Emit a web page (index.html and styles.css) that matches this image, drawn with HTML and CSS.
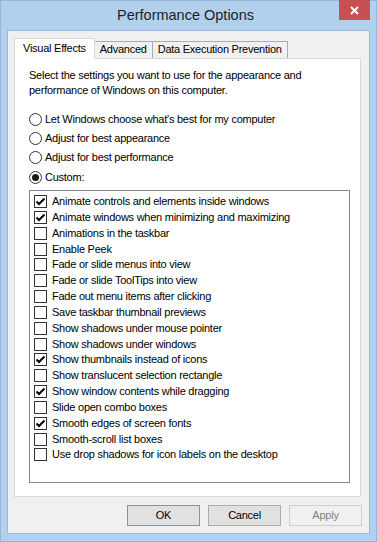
FILE: index.html
```html
<!DOCTYPE html>
<html>
<head>
<meta charset="utf-8">
<link rel="stylesheet" href="styles.css">
</head>
<body>
<div class="window">
  <div class="titlebar">
    <span class="title">Performance Options</span>
    <div class="close"><svg width="9" height="9" viewBox="0 0 9 9"><path d="M1 1 L8 8 M8 1 L1 8" stroke="#fff" stroke-width="2"/></svg></div>
  </div>
  <div class="client">
    <div class="tabs">
      <div class="tab active">Visual Effects</div>
      <div class="tab">Advanced</div>
      <div class="tab">Data Execution Prevention</div>
    </div>
    <div class="panel">
      <p class="intro">Select the settings you want to use for the appearance and performance of Windows on this computer.</p>
      <div class="radios">
        <div class="radio"><span class="circle"></span>Let Windows choose what's best for my computer</div>
        <div class="radio"><span class="circle"></span>Adjust for best appearance</div>
        <div class="radio"><span class="circle"></span>Adjust for best performance</div>
        <div class="radio"><span class="circle on"></span>Custom:</div>
      </div>
      <div class="listbox">
        <div class="item"><span class="box on"></span>Animate controls and elements inside windows</div>
        <div class="item"><span class="box on"></span>Animate windows when minimizing and maximizing</div>
        <div class="item"><span class="box"></span>Animations in the taskbar</div>
        <div class="item"><span class="box"></span>Enable Peek</div>
        <div class="item"><span class="box"></span>Fade or slide menus into view</div>
        <div class="item"><span class="box"></span>Fade or slide ToolTips into view</div>
        <div class="item"><span class="box"></span>Fade out menu items after clicking</div>
        <div class="item"><span class="box"></span>Save taskbar thumbnail previews</div>
        <div class="item"><span class="box"></span>Show shadows under mouse pointer</div>
        <div class="item"><span class="box"></span>Show shadows under windows</div>
        <div class="item"><span class="box on"></span>Show thumbnails instead of icons</div>
        <div class="item"><span class="box"></span>Show translucent selection rectangle</div>
        <div class="item"><span class="box on"></span>Show window contents while dragging</div>
        <div class="item"><span class="box"></span>Slide open combo boxes</div>
        <div class="item"><span class="box on"></span>Smooth edges of screen fonts</div>
        <div class="item"><span class="box"></span>Smooth-scroll list boxes</div>
        <div class="item"><span class="box"></span>Use drop shadows for icon labels on the desktop</div>
      </div>
    </div>
    <div class="buttons">
      <div class="btn default">OK</div>
      <div class="btn">Cancel</div>
      <div class="btn disabled">Apply</div>
    </div>
  </div>
</div>
</body>
</html>
```
FILE: styles.css
```css
* { box-sizing: border-box; }
html, body { margin: 0; padding: 0; }
body {
  width: 377px;
  height: 542px;
  background: #b0d0ee;
  font-family: "Liberation Sans", Arial, sans-serif;
  font-size: 11px;
  letter-spacing: -0.25px;
  color: #000;
  overflow: hidden;
}
.window {
  width: 377px;
  height: 542px;
  border: 1px solid #93b6da;
  display: flex;
  flex-direction: column;
}
.titlebar {
  height: 29px;
  display: grid;
  grid-template-columns: 1fr auto 1fr;
  padding-right: 6px;
}
.title {
  grid-column: 2;
  font-size: 14.5px;
  letter-spacing: 0;
  line-height: 29px;
  color: #1e1e1e;
}
.close {
  grid-column: 3;
  justify-self: end;
  align-self: start;
  width: 31px;
  height: 20px;
  margin-top: -1px;
  background: #c75050;
  display: flex;
  align-items: center;
  justify-content: center;
}
.client {
  margin: 0 6px 0 6px;
  height: 504px;
  border: 1px solid #9ab8d8;
  background: #f0f0f0;
  padding: 7px 8px 7px 6px;
  display: flex;
  flex-direction: column;
}
.tabs {
  height: 20px;
  display: flex;
  align-items: flex-end;
}
.tab {
  height: 17px;
  line-height: 15px;
  padding: 0 5px;
  border: 1px solid #acacac;
  border-bottom: none;
  background: #f0f0f0;
  margin-left: -1px;
  white-space: nowrap;
}
.tab.active {
  height: 21px;
  margin-left: 0;
  margin-bottom: -1px;
  padding: 0 8px;
  line-height: 18px;
  background: #fff;
  border-color: #d9d9d9;
  z-index: 2;
}
.tab.active + .tab { margin-left: 0; border-left: none; }
.panel {
  flex: 1;
  background: #fff;
  border: 1px solid #d9d9d9;
  padding: 9px 10px 13px 14px;
  display: flex;
  flex-direction: column;
}
.intro {
  margin: 0 0 11px 0;
  line-height: 15px;
}
.radios {
  display: flex;
  flex-direction: column;
  margin-bottom: 3px;
}
.radio {
  height: 19.4px;
  display: flex;
  align-items: center;
  white-space: nowrap;
}
.circle {
  width: 13px;
  height: 13px;
  border: 1px solid #333;
  border-radius: 50%;
  background: #fff;
  margin: 1px 3px 0 0;
  flex: none;
  display: flex;
  align-items: center;
  justify-content: center;
}
.circle.on::after {
  content: "";
  width: 7px;
  height: 7px;
  border-radius: 50%;
  background: #1a1a1a;
}
.listbox {
  flex: 1;
  border: 1px solid #828790;
  padding: 3px 4px;
  display: flex;
  flex-direction: column;
}
.item {
  height: 15.85px;
  display: flex;
  align-items: center;
  white-space: nowrap;
  padding-bottom: 1px;
}
.box {
  width: 13px;
  height: 13px;
  border: 1px solid #333;
  background: #fff;
  margin: 1px 5px 0 0;
  flex: none;
}
.box.on {
  background: #fff url("data:image/svg+xml;utf8,<svg xmlns='http://www.w3.org/2000/svg' width='11' height='11' viewBox='0 0 11 11'><path d='M1.5 5.5 L4 8 L9.5 2.5' fill='none' stroke='%23000' stroke-width='2'/></svg>") no-repeat center;
}
.buttons {
  margin-top: 8px;
  margin-right: -1px;
  display: flex;
  justify-content: flex-end;
  gap: 8px;
}
.btn {
  width: 73px;
  height: 21px;
  border: 1px solid #adadad;
  background: #e1e1e1;
  text-align: center;
  line-height: 19px;
}
.btn.default { border-color: #5a9ee0; }
.btn.disabled {
  border-color: #cfcfcf;
  background: #f0f0f0;
  color: #838383;
}
```
